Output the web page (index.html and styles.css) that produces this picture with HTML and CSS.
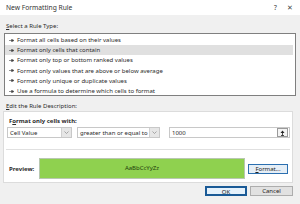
FILE: index.html
```html
<!DOCTYPE html>
<html lang="en">

<head>
    <meta charset="UTF-8" />
    <title>New Formatting Rule</title>
    <link rel="stylesheet" href="styles.css">
</head>

<body>

    <div class="dialog">
        <div class="titlebar">
            <span class="title">New Formatting Rule</span>
            <span class="help">?</span>
            <span class="close">&#x2715;</span>
        </div>

        <div class="content">
            <div class="label select-label"><u>S</u>elect a Rule Type:</div>
            <div class="listbox">
                <div class="item"><svg class="arrow" width="5" height="3" viewBox="0 0 5 3"><path d="M0 1.5H3.2M2.6 0.3L5 1.5L2.6 2.7Z" stroke="#444" stroke-width="0.6" fill="#444"/></svg>Format all cells based on their values</div>
                <div class="item selected"><svg class="arrow" width="5" height="3" viewBox="0 0 5 3"><path d="M0 1.5H3.2M2.6 0.3L5 1.5L2.6 2.7Z" stroke="#444" stroke-width="0.6" fill="#444"/></svg>Format only cells that contain</div>
                <div class="item"><svg class="arrow" width="5" height="3" viewBox="0 0 5 3"><path d="M0 1.5H3.2M2.6 0.3L5 1.5L2.6 2.7Z" stroke="#444" stroke-width="0.6" fill="#444"/></svg>Format only top or bottom ranked values</div>
                <div class="item"><svg class="arrow" width="5" height="3" viewBox="0 0 5 3"><path d="M0 1.5H3.2M2.6 0.3L5 1.5L2.6 2.7Z" stroke="#444" stroke-width="0.6" fill="#444"/></svg>Format only values that are above or below average</div>
                <div class="item"><svg class="arrow" width="5" height="3" viewBox="0 0 5 3"><path d="M0 1.5H3.2M2.6 0.3L5 1.5L2.6 2.7Z" stroke="#444" stroke-width="0.6" fill="#444"/></svg>Format only unique or duplicate values</div>
                <div class="item"><svg class="arrow" width="5" height="3" viewBox="0 0 5 3"><path d="M0 1.5H3.2M2.6 0.3L5 1.5L2.6 2.7Z" stroke="#444" stroke-width="0.6" fill="#444"/></svg>Use a formula to determine which cells to format</div>
            </div>

            <div class="label edit-label"><u>E</u>dit the Rule Description:</div>
            <div class="panel">
                <div class="panel-title">F<u>o</u>rmat only cells with:</div>
                <div class="controls">
                    <div class="combo combo-first">
                        <span class="combo-text">Cell Value</span>
                        <span class="drop"><svg width="5" height="3" viewBox="0 0 5 3"><path d="M0.5 0.5L2.5 2.5L4.5 0.5" stroke="#888" stroke-width="0.7" fill="none"/></svg></span>
                    </div>
                    <div class="combo combo-op">
                        <span class="combo-text">greater than or equal to</span>
                        <span class="drop"><svg width="5" height="3" viewBox="0 0 5 3"><path d="M0.5 0.5L2.5 2.5L4.5 0.5" stroke="#888" stroke-width="0.7" fill="none"/></svg></span>
                    </div>
                    <div class="value-box">
                        <span class="combo-text">1000</span>
                        <span class="ref-btn"><svg width="5" height="6" viewBox="0 0 5 6"><path d="M2.5 0.5L0.5 3H4.5Z" fill="#222"/><path d="M2.5 3V5.5M1 5.5H4" stroke="#222" stroke-width="0.8"/></svg></span>
                    </div>
                </div>
                <div class="separator"></div>
                <div class="preview-row">
                    <span class="preview-label">Preview:</span>
                    <div class="preview-box">AaBbCcYyZz</div>
                    <button class="btn btn-format"><u>F</u>ormat...</button>
                </div>
            </div>

            <div class="actions">
                <button class="btn btn-ok">OK</button>
                <button class="btn btn-cancel">Cancel</button>
            </div>
        </div>
    </div>

</body>

</html>
```

FILE: styles.css
```css
body {
    margin: 0;
    background-color: #f0f0f0;
    font-family: 'Noto Sans', 'Open Sans', sans-serif;
    font-size: 6px;
    color: #2a2a2a;
}

.dialog {
    width: 300px;
    height: 204px;
    overflow: hidden;
}

.titlebar {
    height: 15px;
    background: #ffffff;
    display: flex;
    align-items: center;
    padding-left: 6px;
    font-size: 6.7px;
    color: #333;
}

.title {
    flex: 1;
}

.help {
    width: 13px;
    font-size: 6.5px;
}

.close {
    width: 13px;
    font-size: 6.5px;
    color: #444;
}

.content {
    padding: 0 4px;
}

.label {
    height: 10px;
    line-height: 10px;
    padding-left: 2px;
}

.select-label {
    margin-top: 6px;
    margin-bottom: 2px;
}

.listbox {
    width: 290px;
    height: 60px;
    background: #ffffff;
    border: 1px solid #7f7f7f;
    padding-top: 1px;
    overflow: hidden;
}

.item {
    height: 10.2px;
    padding-left: 4px;
    display: flex;
    align-items: center;
    white-space: nowrap;
}

.item.selected {
    background: #e0e0e0;
    margin-right: 2px;
}

.arrow {
    margin-right: 3px;
}

.edit-label {
    margin-top: 5px;
}

.panel {
    width: 288px;
    height: 70px;
    margin-left: -1px;
    background: #ffffff;
    border: 1px solid #dcdcdc;
}

.panel-title {
    font-weight: bold;
    padding-left: 5px;
    margin-top: 5px;
    height: 9px;
    line-height: 9px;
}

.controls {
    display: flex;
    margin-top: 1px;
    padding-left: 3px;
}

.combo,
.value-box {
    height: 9px;
    border: 1px solid #c8c8c8;
    display: flex;
    align-items: center;
    background: #ffffff;
}

.combo-text {
    flex: 1;
    padding-left: 2px;
    white-space: nowrap;
    overflow: hidden;
}

.combo-first {
    width: 63px;
}

.combo-op {
    width: 81px;
    margin-left: 5px;
}

.value-box {
    width: 118px;
    margin-left: 9px;
    padding-right: 1px;
}

.drop {
    width: 9px;
    height: 9px;
    background: #e6e6e6;
    border-left: 1px solid #d0d0d0;
    display: flex;
    align-items: center;
    justify-content: center;
}

.ref-btn {
    width: 9px;
    height: 7px;
    border: 1px solid #9a9a9a;
    background: #f4f4f4;
    display: flex;
    align-items: center;
    justify-content: center;
}

.separator {
    height: 1px;
    background: #e0e0e0;
    margin: 11px 2px 0 2px;
}

.preview-row {
    display: flex;
    align-items: center;
    margin-top: 8px;
    padding-left: 5px;
}

.preview-label {
    width: 30px;
    font-weight: bold;
}

.preview-box {
    width: 204px;
    height: 19px;
    line-height: 19px;
    background: #8fd14f;
    border: 1px solid #b8c8b0;
    text-align: center;
    color: #1e3d0c;
}

.btn {
    box-sizing: border-box;
    font-family: inherit;
    font-size: 6px;
    padding: 0;
    color: #222;
    cursor: pointer;
}

.btn-format {
    width: 40px;
    height: 10px;
    margin-left: 3px;
    background: #e5eef6;
    border: 1px solid #2b6fb0;
}

.actions {
    display: flex;
    justify-content: flex-end;
    gap: 3px;
    margin-top: 3px;
    padding-right: 3px;
}

.btn-ok {
    width: 42px;
    height: 10px;
    background: #e5f1fb;
    border: 2px solid #1a5a96;
}

.btn-cancel {
    width: 43px;
    height: 10px;
    background: #e1e1e1;
    border: 1px solid #adadad;
}
```
